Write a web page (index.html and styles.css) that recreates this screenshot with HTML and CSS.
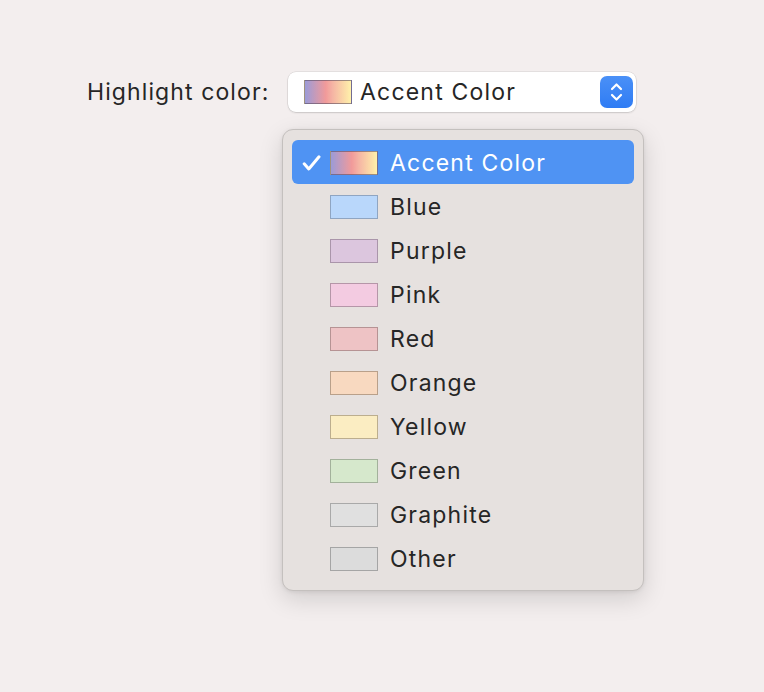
FILE: index.html
```html
<!DOCTYPE html>
<html lang="en">
<head>
    <meta charset="UTF-8">
    <title>Highlight color</title>
    <link rel="stylesheet" href="styles.css">
</head>
<body>
    <div id="prefs">
        <div class="pref-row">
            <label class="pref-label">Highlight color:</label>
            <div class="popup">
                <span class="swatch accent"></span>
                <span class="popup-text">Accent Color</span>
                <span class="stepper">
                    <svg width="33" height="32" viewBox="0 0 33 32">
                        <path d="M12 13 L16.5 8.5 L21 13" fill="none" stroke="#fff" stroke-width="2.2" stroke-linecap="round" stroke-linejoin="round"/>
                        <path d="M12 19 L16.5 23.5 L21 19" fill="none" stroke="#fff" stroke-width="2.2" stroke-linecap="round" stroke-linejoin="round"/>
                    </svg>
                </span>
            </div>
        </div>

        <div id="menu">
            <div class="item selected">
                <span class="check">
                    <svg width="19" height="16" viewBox="0 0 19 16">
                        <path d="M2.2 8.8 L6.8 14 L17 1.8" fill="none" stroke="#fff" stroke-width="3" stroke-linecap="round" stroke-linejoin="round"/>
                    </svg>
                </span>
                <span class="swatch accent"></span>
                <span class="item-text">Accent Color</span>
            </div>
            <div class="item"><span class="check"></span><span class="swatch blue"></span><span class="item-text">Blue</span></div>
            <div class="item"><span class="check"></span><span class="swatch purple"></span><span class="item-text">Purple</span></div>
            <div class="item"><span class="check"></span><span class="swatch pink"></span><span class="item-text">Pink</span></div>
            <div class="item"><span class="check"></span><span class="swatch red"></span><span class="item-text">Red</span></div>
            <div class="item"><span class="check"></span><span class="swatch orange"></span><span class="item-text">Orange</span></div>
            <div class="item"><span class="check"></span><span class="swatch yellow"></span><span class="item-text">Yellow</span></div>
            <div class="item"><span class="check"></span><span class="swatch green"></span><span class="item-text">Green</span></div>
            <div class="item"><span class="check"></span><span class="swatch graphite"></span><span class="item-text">Graphite</span></div>
            <div class="item"><span class="check"></span><span class="swatch other"></span><span class="item-text">Other</span></div>
        </div>
    </div>
</body>
</html>
```

FILE: styles.css
```css
body {
    margin: 0;
    background-color: #f3eeee;
    font-family: 'Inter', 'Noto Sans', sans-serif;
    color: #262626;
}
#prefs {
    position: relative;
    width: 764px;
    height: 692px;
}
.pref-row {
    display: flex;
    align-items: center;
    padding: 72px 0 0 87px;
}
.pref-label {
    font-size: 23px;
    letter-spacing: 1.1px;
    width: 183px;
    margin-right: 18px;
    white-space: nowrap;
}
.popup {
    display: flex;
    align-items: center;
    width: 348px;
    height: 40px;
    box-sizing: border-box;
    padding: 0 3px 0 16px;
    background-color: #fff;
    border-radius: 8px;
    box-shadow: 0 0 0 0.5px rgba(0,0,0,0.12), 0 1px 2px rgba(0,0,0,0.12);
}
.popup-text {
    font-size: 23px;
    letter-spacing: 1.2px;
    margin-left: 8px;
    flex: 1;
}
.stepper {
    display: flex;
    width: 33px;
    height: 32px;
    border-radius: 7px;
    background: linear-gradient(#4a90f7, #2f7cf4);
}
.swatch {
    display: block;
    width: 48px;
    height: 24px;
    box-sizing: border-box;
    border: 1px solid rgba(0,0,0,0.3);
    flex-shrink: 0;
}
.swatch.accent {
    background: linear-gradient(to right, #9b9bd8 0%, #f19a9a 45%, #f5b4a4 60%, #fff1aa 100%);
    border-color: rgba(80,70,90,0.55);
}
.swatch.blue { background-color: #b9d7fb; border-color: #8fa5c2; }
.swatch.purple { background-color: #dcc6de; border-color: #aa95aa; }
.swatch.pink { background-color: #f3cbe1; border-color: #b596a8; }
.swatch.red { background-color: #eec3c5; border-color: #b69394; }
.swatch.orange { background-color: #f8d9c0; border-color: #b9a08a; }
.swatch.yellow { background-color: #fbedc2; border-color: #bcae8e; }
.swatch.green { background-color: #d6e8cc; border-color: #a3b19b; }
.swatch.graphite { background-color: #e0e0e0; border-color: #a9a9a9; }
.swatch.other { background-color: #dcdcdc; border-color: #a5a5a5; }

#menu {
    position: absolute;
    left: 282px;
    top: 129px;
    width: 362px;
    box-sizing: border-box;
    padding: 10px 9px 10px 9px;
    background-color: #e6e1df;
    border: 1px solid #c4c0be;
    border-radius: 11px;
    box-shadow: 0 8px 24px rgba(0,0,0,0.14), 0 1px 4px rgba(0,0,0,0.08);
}
.item {
    display: flex;
    align-items: center;
    height: 44px;
    box-sizing: border-box;
    padding-top: 1px;
    border-radius: 6px;
    padding-left: 10px;
}
.item.selected {
    background-color: #4f93f3;
    color: #fff;
}
.check {
    display: flex;
    width: 19px;
    height: 16px;
    margin-right: 9px;
}
.item-text {
    font-size: 23px;
    letter-spacing: 1.2px;
    margin-left: 12px;
}
```
